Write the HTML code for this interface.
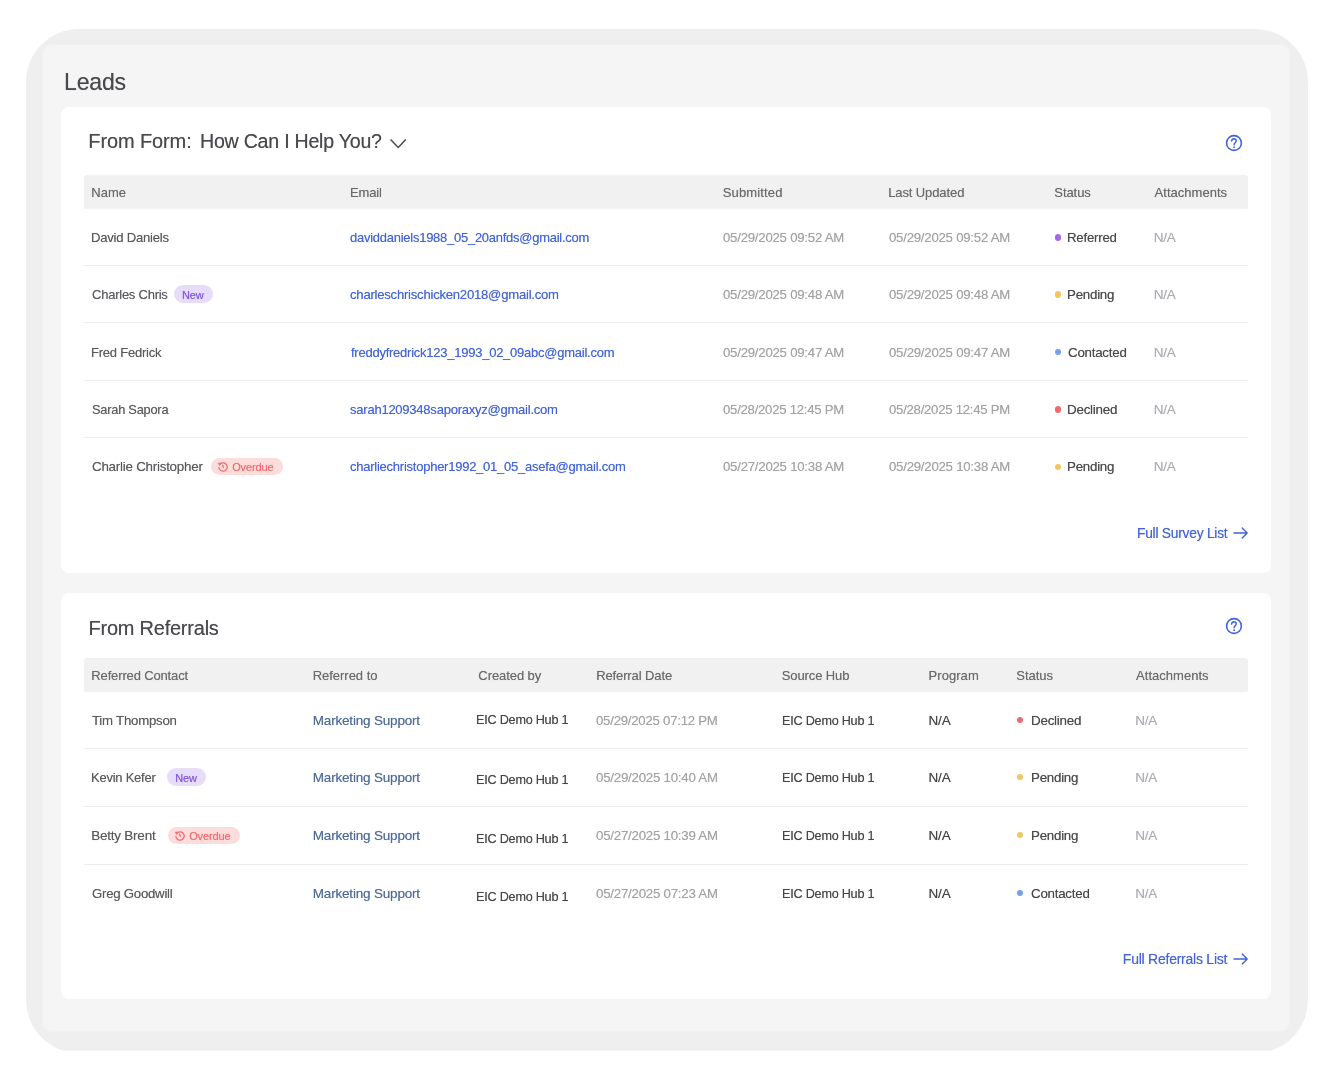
<!DOCTYPE html>
<html><head><meta charset="utf-8"><title>Leads</title>
<style>
html,body{margin:0;padding:0;}
body{width:1340px;height:1078px;position:relative;overflow:hidden;background:#ffffff;font-family:"Liberation Sans",sans-serif;}
#w{position:absolute;left:0;top:0;width:1340px;height:1078px;will-change:transform;}
.t{position:absolute;white-space:nowrap;}
.b{position:absolute;}
</style></head><body><div id="w">
<div class="b" style="left:26px;top:29px;width:1282.00px;height:1024.00px;background:#efefef;border-radius:53px;clip-path:inset(0 0 2.3px 0);"></div>
<div class="b" style="left:42px;top:44px;width:1248.00px;height:988.00px;background:#f5f5f5;border-radius:10px;box-shadow:inset 0 0 0 1px #f1f1f1;"></div>
<div class="b" style="left:60.5px;top:107px;width:1210.50px;height:466.00px;background:#ffffff;border-radius:8px;"></div>
<div class="b" style="left:60.5px;top:592.5px;width:1210.50px;height:406.50px;background:#ffffff;border-radius:8px;"></div>
<svg class="b" style="left:388px;top:136px" width="20" height="14" viewBox="0 0 20 14"><path d="M2.6 3.6 L10.2 11.4 L17.8 3.6" fill="none" stroke="#4a4a4d" stroke-width="1.5"/></svg>
<svg class="b" style="left:1223.9px;top:133px" width="20" height="20" viewBox="0 0 20 20"><circle cx="10" cy="10" r="7.4" fill="none" stroke="#4263d8" stroke-width="1.6"/><path d="M7.6 8.1 Q7.9 5.8 10 5.8 Q12.2 5.9 12.2 7.8 Q12.1 9.0 11 10 Q10.1 10.8 10.1 11.7" fill="none" stroke="#4263d8" stroke-width="1.5" stroke-linecap="round"/><circle cx="10.1" cy="14.2" r="0.9" fill="#4263d8"/></svg>
<svg class="b" style="left:1223.9px;top:616px" width="20" height="20" viewBox="0 0 20 20"><circle cx="10" cy="10" r="7.4" fill="none" stroke="#4263d8" stroke-width="1.6"/><path d="M7.6 8.1 Q7.9 5.8 10 5.8 Q12.2 5.9 12.2 7.8 Q12.1 9.0 11 10 Q10.1 10.8 10.1 11.7" fill="none" stroke="#4263d8" stroke-width="1.5" stroke-linecap="round"/><circle cx="10.1" cy="14.2" r="0.9" fill="#4263d8"/></svg>
<div class="b" style="left:84px;top:175px;width:1164.00px;height:34.00px;background:#f1f1f1;border-radius:3px 3px 2px 2px;"></div>
<div class="b" style="left:84px;top:265px;width:1164.00px;height:1.00px;background:#ededed;"></div>
<div class="b" style="left:84px;top:322px;width:1164.00px;height:1.00px;background:#ededed;"></div>
<div class="b" style="left:84px;top:380px;width:1164.00px;height:1.00px;background:#ededed;"></div>
<div class="b" style="left:84px;top:437px;width:1164.00px;height:1.00px;background:#ededed;"></div>
<div class="b" style="left:1054.90px;top:234.45px;width:6.2px;height:6.2px;border-radius:50%;background:#a06ae6"></div>
<div class="b" style="left:174px;top:285.05px;width:39px;height:17.8px;background:#e7ddf9;border-radius:9px;"></div>
<div class="b" style="left:1054.90px;top:291.45px;width:6.2px;height:6.2px;border-radius:50%;background:#f2c662"></div>
<div class="b" style="left:1054.90px;top:349.05px;width:6.2px;height:6.2px;border-radius:50%;background:#77a0e8"></div>
<div class="b" style="left:1054.90px;top:406.35px;width:6.2px;height:6.2px;border-radius:50%;background:#f06a70"></div>
<div class="b" style="left:210.5px;top:457.70px;width:72.5px;height:16.9px;background:#fddcdc;border-radius:9px;"></div>
<svg class="b" style="left:217.40px;top:460.60px" width="12" height="12" viewBox="0 0 12 12"><path d="M1.85 6.5 A4.2 4.2 0 1 0 3.4 2.7" fill="none" stroke="#f26a6d" stroke-width="1.25" stroke-linecap="round"/><path d="M1.3 2.0 L4.2 2.2 L2.6 4.6 Z" fill="#f26a6d" stroke="#f26a6d" stroke-width="0.6" stroke-linejoin="round"/><path d="M6.3 6.3 L5.7 4.2" fill="none" stroke="#f26a6d" stroke-width="1.3" stroke-linecap="round"/></svg>
<div class="b" style="left:1054.90px;top:463.50px;width:6.2px;height:6.2px;border-radius:50%;background:#f2c662"></div>
<svg class="b" style="left:1232px;top:524.9px" width="17" height="16" viewBox="0 0 17 16"><path d="M2 8 L15.2 8 M10.2 2.9 L15.2 8 L10.2 13.1" fill="none" stroke="#4264d6" stroke-width="1.4" stroke-linejoin="round" stroke-linecap="round"/></svg>
<div class="b" style="left:84px;top:658px;width:1164.00px;height:34.00px;background:#f1f1f1;border-radius:3px 3px 2px 2px;"></div>
<div class="b" style="left:84px;top:748px;width:1164.00px;height:1.00px;background:#ededed;"></div>
<div class="b" style="left:84px;top:806px;width:1164.00px;height:1.00px;background:#ededed;"></div>
<div class="b" style="left:84px;top:864px;width:1164.00px;height:1.00px;background:#ededed;"></div>
<div class="b" style="left:1017.20px;top:716.95px;width:6.2px;height:6.2px;border-radius:50%;background:#f06a70"></div>
<div class="b" style="left:167.2px;top:768.10px;width:39px;height:17.8px;background:#e7ddf9;border-radius:9px;"></div>
<div class="b" style="left:1017.20px;top:774.20px;width:6.2px;height:6.2px;border-radius:50%;background:#f2c662"></div>
<div class="b" style="left:167.5px;top:826.70px;width:72.5px;height:16.9px;background:#fddcdc;border-radius:9px;"></div>
<svg class="b" style="left:174.40px;top:829.60px" width="12" height="12" viewBox="0 0 12 12"><path d="M1.85 6.5 A4.2 4.2 0 1 0 3.4 2.7" fill="none" stroke="#f26a6d" stroke-width="1.25" stroke-linecap="round"/><path d="M1.3 2.0 L4.2 2.2 L2.6 4.6 Z" fill="#f26a6d" stroke="#f26a6d" stroke-width="0.6" stroke-linejoin="round"/><path d="M6.3 6.3 L5.7 4.2" fill="none" stroke="#f26a6d" stroke-width="1.3" stroke-linecap="round"/></svg>
<div class="b" style="left:1017.20px;top:832.20px;width:6.2px;height:6.2px;border-radius:50%;background:#f2c662"></div>
<div class="b" style="left:1017.20px;top:890.20px;width:6.2px;height:6.2px;border-radius:50%;background:#77a0e8"></div>
<svg class="b" style="left:1232px;top:950.7px" width="17" height="16" viewBox="0 0 17 16"><path d="M2 8 L15.2 8 M10.2 2.9 L15.2 8 L10.2 13.1" fill="none" stroke="#4264d6" stroke-width="1.4" stroke-linejoin="round" stroke-linecap="round"/></svg>
<div class="t" style="left:64.13px;top:67.00px;font-size:24px;line-height:30.0px;color:#48484d;letter-spacing:-0.250px;text-shadow:0 0 0.7px rgba(72,72,77,0.6);transform:scaleX(0.9623);transform-origin:1.97px 0;">Leads</div>
<div class="t" style="left:88.36px;top:129.00px;font-size:20px;line-height:25.0px;color:#48484d;letter-spacing:-0.123px;text-shadow:0 0 0.7px rgba(72,72,77,0.6);">From Form:</div>
<div class="t" style="left:200.16px;top:129.00px;font-size:20px;line-height:25.0px;color:#48484d;letter-spacing:-0.250px;text-shadow:0 0 0.7px rgba(72,72,77,0.6);transform:scaleX(0.9800);transform-origin:1.64px 0;">How Can I Help You?</div>
<div class="t" style="left:91.33px;top:185.00px;font-size:13px;line-height:16.25px;color:#6a6a6a;letter-spacing:-0.014px;text-shadow:0 0 0.7px rgba(106,106,106,0.6);">Name</div>
<div class="t" style="left:349.93px;top:185.00px;font-size:13px;line-height:16.25px;color:#6a6a6a;letter-spacing:-0.124px;text-shadow:0 0 0.7px rgba(106,106,106,0.6);">Email</div>
<div class="t" style="left:722.71px;top:185.00px;font-size:13px;line-height:16.25px;color:#6a6a6a;letter-spacing:0.153px;text-shadow:0 0 0.7px rgba(106,106,106,0.6);">Submitted</div>
<div class="t" style="left:888.13px;top:185.00px;font-size:13px;line-height:16.25px;color:#6a6a6a;letter-spacing:-0.099px;text-shadow:0 0 0.7px rgba(106,106,106,0.6);">Last Updated</div>
<div class="t" style="left:1054.31px;top:185.00px;font-size:13px;line-height:16.25px;color:#6a6a6a;letter-spacing:-0.074px;text-shadow:0 0 0.7px rgba(106,106,106,0.6);">Status</div>
<div class="t" style="left:1154.57px;top:185.00px;font-size:13px;line-height:16.25px;color:#6a6a6a;letter-spacing:0.021px;text-shadow:0 0 0.7px rgba(106,106,106,0.6);">Attachments</div>
<div class="t" style="left:91.29px;top:230.00px;font-size:13.5px;line-height:16.88px;color:#5a5a5e;letter-spacing:-0.250px;text-shadow:0 0 0.7px rgba(90,90,94,0.6);transform:scaleX(0.9709);transform-origin:1.11px 0;">David Daniels</div>
<div class="t" style="left:350.13px;top:230.00px;font-size:13.5px;line-height:16.88px;color:#4264d6;letter-spacing:-0.250px;text-shadow:0 0 0.7px rgba(66,100,214,0.6);transform:scaleX(0.9597);transform-origin:0.57px 0;">daviddaniels1988_05_20anfds@gmail.com</div>
<div class="t" style="left:722.97px;top:230.00px;font-size:13.5px;line-height:16.88px;color:#a3a3a6;letter-spacing:-0.250px;text-shadow:0 0 0.7px rgba(163,163,166,0.6);transform:scaleX(0.9790);transform-origin:0.53px 0;">05/29/2025 09:52 AM</div>
<div class="t" style="left:888.67px;top:230.00px;font-size:13.5px;line-height:16.88px;color:#a3a3a6;letter-spacing:-0.250px;text-shadow:0 0 0.7px rgba(163,163,166,0.6);transform:scaleX(0.9790);transform-origin:0.53px 0;">05/29/2025 09:52 AM</div>
<div class="t" style="left:1067.19px;top:230.00px;font-size:13.5px;line-height:16.88px;color:#48484b;letter-spacing:-0.250px;text-shadow:0 0 0.7px rgba(72,72,75,0.6);transform:scaleX(0.9829);transform-origin:1.11px 0;">Referred</div>
<div class="t" style="left:1153.69px;top:230.00px;font-size:13.5px;line-height:16.88px;color:#adadb5;letter-spacing:-0.175px;text-shadow:0 0 0.7px rgba(173,173,181,0.6);">N/A</div>
<div class="t" style="left:91.71px;top:287.00px;font-size:13.5px;line-height:16.88px;color:#5a5a5e;letter-spacing:-0.250px;text-shadow:0 0 0.7px rgba(90,90,94,0.6);transform:scaleX(0.9629);transform-origin:0.69px 0;">Charles Chris</div>
<div class="t" style="left:182.10px;top:289.00px;font-size:11px;line-height:13.75px;color:#8156de;letter-spacing:-0.185px;text-shadow:0 0 0.7px rgba(129,86,222,0.6);">New</div>
<div class="t" style="left:350.13px;top:287.00px;font-size:13.5px;line-height:16.88px;color:#4264d6;letter-spacing:-0.250px;text-shadow:0 0 0.7px rgba(66,100,214,0.6);transform:scaleX(0.9718);transform-origin:0.57px 0;">charleschrischicken2018@gmail.com</div>
<div class="t" style="left:722.97px;top:287.00px;font-size:13.5px;line-height:16.88px;color:#a3a3a6;letter-spacing:-0.250px;text-shadow:0 0 0.7px rgba(163,163,166,0.6);transform:scaleX(0.9790);transform-origin:0.53px 0;">05/29/2025 09:48 AM</div>
<div class="t" style="left:888.67px;top:287.00px;font-size:13.5px;line-height:16.88px;color:#a3a3a6;letter-spacing:-0.250px;text-shadow:0 0 0.7px rgba(163,163,166,0.6);transform:scaleX(0.9790);transform-origin:0.53px 0;">05/29/2025 09:48 AM</div>
<div class="t" style="left:1067.19px;top:287.00px;font-size:13.5px;line-height:16.88px;color:#48484b;letter-spacing:-0.250px;text-shadow:0 0 0.7px rgba(72,72,75,0.6);transform:scaleX(0.9872);transform-origin:1.11px 0;">Pending</div>
<div class="t" style="left:1153.69px;top:287.00px;font-size:13.5px;line-height:16.88px;color:#adadb5;letter-spacing:-0.175px;text-shadow:0 0 0.7px rgba(173,173,181,0.6);">N/A</div>
<div class="t" style="left:91.29px;top:345.00px;font-size:13.5px;line-height:16.88px;color:#5a5a5e;letter-spacing:-0.250px;text-shadow:0 0 0.7px rgba(90,90,94,0.6);transform:scaleX(0.9637);transform-origin:1.11px 0;">Fred Fedrick</div>
<div class="t" style="left:350.51px;top:345.00px;font-size:13.5px;line-height:16.88px;color:#4264d6;letter-spacing:-0.250px;text-shadow:0 0 0.7px rgba(66,100,214,0.6);transform:scaleX(0.9620);transform-origin:0.19px 0;">freddyfredrick123_1993_02_09abc@gmail.com</div>
<div class="t" style="left:722.97px;top:345.00px;font-size:13.5px;line-height:16.88px;color:#a3a3a6;letter-spacing:-0.250px;text-shadow:0 0 0.7px rgba(163,163,166,0.6);transform:scaleX(0.9790);transform-origin:0.53px 0;">05/29/2025 09:47 AM</div>
<div class="t" style="left:888.67px;top:345.00px;font-size:13.5px;line-height:16.88px;color:#a3a3a6;letter-spacing:-0.250px;text-shadow:0 0 0.7px rgba(163,163,166,0.6);transform:scaleX(0.9790);transform-origin:0.53px 0;">05/29/2025 09:47 AM</div>
<div class="t" style="left:1067.61px;top:345.00px;font-size:13.5px;line-height:16.88px;color:#48484b;letter-spacing:-0.250px;text-shadow:0 0 0.7px rgba(72,72,75,0.6);transform:scaleX(0.9878);transform-origin:0.69px 0;">Contacted</div>
<div class="t" style="left:1153.69px;top:345.00px;font-size:13.5px;line-height:16.88px;color:#adadb5;letter-spacing:-0.175px;text-shadow:0 0 0.7px rgba(173,173,181,0.6);">N/A</div>
<div class="t" style="left:91.79px;top:402.00px;font-size:13.5px;line-height:16.88px;color:#5a5a5e;letter-spacing:-0.250px;text-shadow:0 0 0.7px rgba(90,90,94,0.6);transform:scaleX(0.9494);transform-origin:0.61px 0;">Sarah Sapora</div>
<div class="t" style="left:350.32px;top:402.00px;font-size:13.5px;line-height:16.88px;color:#4264d6;letter-spacing:-0.250px;text-shadow:0 0 0.7px rgba(66,100,214,0.6);transform:scaleX(0.9644);transform-origin:0.38px 0;">sarah1209348saporaxyz@gmail.com</div>
<div class="t" style="left:722.97px;top:402.00px;font-size:13.5px;line-height:16.88px;color:#a3a3a6;letter-spacing:-0.250px;text-shadow:0 0 0.7px rgba(163,163,166,0.6);transform:scaleX(0.9724);transform-origin:0.53px 0;">05/28/2025 12:45 PM</div>
<div class="t" style="left:888.67px;top:402.00px;font-size:13.5px;line-height:16.88px;color:#a3a3a6;letter-spacing:-0.250px;text-shadow:0 0 0.7px rgba(163,163,166,0.6);transform:scaleX(0.9724);transform-origin:0.53px 0;">05/28/2025 12:45 PM</div>
<div class="t" style="left:1067.19px;top:402.00px;font-size:13.5px;line-height:16.88px;color:#48484b;letter-spacing:-0.250px;text-shadow:0 0 0.7px rgba(72,72,75,0.6);transform:scaleX(0.9930);transform-origin:1.11px 0;">Declined</div>
<div class="t" style="left:1153.69px;top:402.00px;font-size:13.5px;line-height:16.88px;color:#adadb5;letter-spacing:-0.175px;text-shadow:0 0 0.7px rgba(173,173,181,0.6);">N/A</div>
<div class="t" style="left:91.71px;top:459.00px;font-size:13.5px;line-height:16.88px;color:#5a5a5e;letter-spacing:-0.250px;text-shadow:0 0 0.7px rgba(90,90,94,0.6);transform:scaleX(0.9913);transform-origin:0.69px 0;">Charlie Christopher</div>
<div class="t" style="left:232.18px;top:461.00px;font-size:11px;line-height:13.75px;color:#f26a6d;letter-spacing:-0.121px;text-shadow:0 0 0.7px rgba(242,106,109,0.6);">Overdue</div>
<div class="t" style="left:350.13px;top:459.00px;font-size:13.5px;line-height:16.88px;color:#4264d6;letter-spacing:-0.250px;text-shadow:0 0 0.7px rgba(66,100,214,0.6);transform:scaleX(0.9620);transform-origin:0.57px 0;">charliechristopher1992_01_05_asefa@gmail.com</div>
<div class="t" style="left:722.97px;top:459.00px;font-size:13.5px;line-height:16.88px;color:#a3a3a6;letter-spacing:-0.250px;text-shadow:0 0 0.7px rgba(163,163,166,0.6);transform:scaleX(0.9790);transform-origin:0.53px 0;">05/27/2025 10:38 AM</div>
<div class="t" style="left:888.67px;top:459.00px;font-size:13.5px;line-height:16.88px;color:#a3a3a6;letter-spacing:-0.250px;text-shadow:0 0 0.7px rgba(163,163,166,0.6);transform:scaleX(0.9790);transform-origin:0.53px 0;">05/29/2025 10:38 AM</div>
<div class="t" style="left:1067.19px;top:459.00px;font-size:13.5px;line-height:16.88px;color:#48484b;letter-spacing:-0.250px;text-shadow:0 0 0.7px rgba(72,72,75,0.6);transform:scaleX(0.9872);transform-origin:1.11px 0;">Pending</div>
<div class="t" style="left:1153.69px;top:459.00px;font-size:13.5px;line-height:16.88px;color:#adadb5;letter-spacing:-0.175px;text-shadow:0 0 0.7px rgba(173,173,181,0.6);">N/A</div>
<div class="t" style="left:1136.65px;top:525.00px;font-size:14px;line-height:17.5px;color:#4264d6;letter-spacing:-0.250px;text-shadow:0 0 0.7px rgba(66,100,214,0.6);transform:scaleX(0.9855);transform-origin:1.15px 0;">Full Survey List</div>
<div class="t" style="left:88.46px;top:616.00px;font-size:20px;line-height:25.0px;color:#48484d;letter-spacing:-0.227px;text-shadow:0 0 0.7px rgba(72,72,77,0.6);">From Referrals</div>
<div class="t" style="left:91.33px;top:668.00px;font-size:13px;line-height:16.25px;color:#6a6a6a;letter-spacing:-0.148px;text-shadow:0 0 0.7px rgba(106,106,106,0.6);">Referred Contact</div>
<div class="t" style="left:312.73px;top:668.00px;font-size:13px;line-height:16.25px;color:#6a6a6a;letter-spacing:-0.029px;text-shadow:0 0 0.7px rgba(106,106,106,0.6);">Referred to</div>
<div class="t" style="left:478.34px;top:668.00px;font-size:13px;line-height:16.25px;color:#6a6a6a;letter-spacing:-0.078px;text-shadow:0 0 0.7px rgba(106,106,106,0.6);">Created by</div>
<div class="t" style="left:596.13px;top:668.00px;font-size:13px;line-height:16.25px;color:#6a6a6a;letter-spacing:-0.109px;text-shadow:0 0 0.7px rgba(106,106,106,0.6);">Referral Date</div>
<div class="t" style="left:781.71px;top:668.00px;font-size:13px;line-height:16.25px;color:#6a6a6a;letter-spacing:-0.105px;text-shadow:0 0 0.7px rgba(106,106,106,0.6);">Source Hub</div>
<div class="t" style="left:928.53px;top:668.00px;font-size:13px;line-height:16.25px;color:#6a6a6a;letter-spacing:0.061px;text-shadow:0 0 0.7px rgba(106,106,106,0.6);">Program</div>
<div class="t" style="left:1016.31px;top:668.00px;font-size:13px;line-height:16.25px;color:#6a6a6a;letter-spacing:-0.054px;text-shadow:0 0 0.7px rgba(106,106,106,0.6);">Status</div>
<div class="t" style="left:1136.07px;top:668.00px;font-size:13px;line-height:16.25px;color:#6a6a6a;letter-spacing:0.021px;text-shadow:0 0 0.7px rgba(106,106,106,0.6);">Attachments</div>
<div class="t" style="left:92.00px;top:713.00px;font-size:13.5px;line-height:16.88px;color:#5a5a5e;letter-spacing:-0.250px;text-shadow:0 0 0.7px rgba(90,90,94,0.6);transform:scaleX(0.9816);transform-origin:0.30px 0;">Tim Thompson</div>
<div class="t" style="left:312.79px;top:713.00px;font-size:13.5px;line-height:16.88px;color:#4f6a97;letter-spacing:-0.186px;text-shadow:0 0 0.7px rgba(79,106,151,0.6);">Marketing Support</div>
<div class="t" style="left:476.39px;top:712.00px;font-size:13.5px;line-height:16.88px;color:#464649;letter-spacing:-0.250px;text-shadow:0 0 0.7px rgba(70,70,73,0.6);transform:scaleX(0.9356);transform-origin:1.11px 0;">EIC Demo Hub 1</div>
<div class="t" style="left:596.47px;top:713.00px;font-size:13.5px;line-height:16.88px;color:#a3a3a6;letter-spacing:-0.250px;text-shadow:0 0 0.7px rgba(163,163,166,0.6);transform:scaleX(0.9780);transform-origin:0.53px 0;">05/29/2025 07:12 PM</div>
<div class="t" style="left:781.59px;top:713.00px;font-size:13.5px;line-height:16.88px;color:#464649;letter-spacing:-0.250px;text-shadow:0 0 0.7px rgba(70,70,73,0.6);transform:scaleX(0.9356);transform-origin:1.11px 0;">EIC Demo Hub 1</div>
<div class="t" style="left:928.59px;top:713.00px;font-size:13.5px;line-height:16.88px;color:#464649;letter-spacing:-0.225px;text-shadow:0 0 0.7px rgba(70,70,73,0.6);">N/A</div>
<div class="t" style="left:1030.59px;top:713.00px;font-size:13.5px;line-height:16.88px;color:#48484b;letter-spacing:-0.250px;text-shadow:0 0 0.7px rgba(72,72,75,0.6);transform:scaleX(0.9930);transform-origin:1.11px 0;">Declined</div>
<div class="t" style="left:1135.29px;top:713.00px;font-size:13.5px;line-height:16.88px;color:#adadb5;letter-spacing:-0.225px;text-shadow:0 0 0.7px rgba(173,173,181,0.6);">N/A</div>
<div class="t" style="left:91.19px;top:770.00px;font-size:13.5px;line-height:16.88px;color:#5a5a5e;letter-spacing:-0.250px;text-shadow:0 0 0.7px rgba(90,90,94,0.6);transform:scaleX(0.9613);transform-origin:1.11px 0;">Kevin Kefer</div>
<div class="t" style="left:175.30px;top:772.00px;font-size:11px;line-height:13.75px;color:#8156de;letter-spacing:-0.185px;text-shadow:0 0 0.7px rgba(129,86,222,0.6);">New</div>
<div class="t" style="left:312.79px;top:770.00px;font-size:13.5px;line-height:16.88px;color:#4f6a97;letter-spacing:-0.186px;text-shadow:0 0 0.7px rgba(79,106,151,0.6);">Marketing Support</div>
<div class="t" style="left:476.39px;top:772.00px;font-size:13.5px;line-height:16.88px;color:#464649;letter-spacing:-0.250px;text-shadow:0 0 0.7px rgba(70,70,73,0.6);transform:scaleX(0.9356);transform-origin:1.11px 0;">EIC Demo Hub 1</div>
<div class="t" style="left:596.47px;top:770.00px;font-size:13.5px;line-height:16.88px;color:#a3a3a6;letter-spacing:-0.250px;text-shadow:0 0 0.7px rgba(163,163,166,0.6);transform:scaleX(0.9847);transform-origin:0.53px 0;">05/29/2025 10:40 AM</div>
<div class="t" style="left:781.59px;top:770.00px;font-size:13.5px;line-height:16.88px;color:#464649;letter-spacing:-0.250px;text-shadow:0 0 0.7px rgba(70,70,73,0.6);transform:scaleX(0.9356);transform-origin:1.11px 0;">EIC Demo Hub 1</div>
<div class="t" style="left:928.59px;top:770.00px;font-size:13.5px;line-height:16.88px;color:#464649;letter-spacing:-0.225px;text-shadow:0 0 0.7px rgba(70,70,73,0.6);">N/A</div>
<div class="t" style="left:1030.59px;top:770.00px;font-size:13.5px;line-height:16.88px;color:#48484b;letter-spacing:-0.250px;text-shadow:0 0 0.7px rgba(72,72,75,0.6);transform:scaleX(0.9872);transform-origin:1.11px 0;">Pending</div>
<div class="t" style="left:1135.29px;top:770.00px;font-size:13.5px;line-height:16.88px;color:#adadb5;letter-spacing:-0.225px;text-shadow:0 0 0.7px rgba(173,173,181,0.6);">N/A</div>
<div class="t" style="left:91.19px;top:828.00px;font-size:13.5px;line-height:16.88px;color:#5a5a5e;letter-spacing:-0.229px;text-shadow:0 0 0.7px rgba(90,90,94,0.6);">Betty Brent</div>
<div class="t" style="left:189.18px;top:830.00px;font-size:11px;line-height:13.75px;color:#f26a6d;letter-spacing:-0.121px;text-shadow:0 0 0.7px rgba(242,106,109,0.6);">Overdue</div>
<div class="t" style="left:312.79px;top:828.00px;font-size:13.5px;line-height:16.88px;color:#4f6a97;letter-spacing:-0.186px;text-shadow:0 0 0.7px rgba(79,106,151,0.6);">Marketing Support</div>
<div class="t" style="left:476.39px;top:831.00px;font-size:13.5px;line-height:16.88px;color:#464649;letter-spacing:-0.250px;text-shadow:0 0 0.7px rgba(70,70,73,0.6);transform:scaleX(0.9356);transform-origin:1.11px 0;">EIC Demo Hub 1</div>
<div class="t" style="left:596.47px;top:828.00px;font-size:13.5px;line-height:16.88px;color:#a3a3a6;letter-spacing:-0.250px;text-shadow:0 0 0.7px rgba(163,163,166,0.6);transform:scaleX(0.9847);transform-origin:0.53px 0;">05/27/2025 10:39 AM</div>
<div class="t" style="left:781.59px;top:828.00px;font-size:13.5px;line-height:16.88px;color:#464649;letter-spacing:-0.250px;text-shadow:0 0 0.7px rgba(70,70,73,0.6);transform:scaleX(0.9356);transform-origin:1.11px 0;">EIC Demo Hub 1</div>
<div class="t" style="left:928.59px;top:828.00px;font-size:13.5px;line-height:16.88px;color:#464649;letter-spacing:-0.225px;text-shadow:0 0 0.7px rgba(70,70,73,0.6);">N/A</div>
<div class="t" style="left:1030.59px;top:828.00px;font-size:13.5px;line-height:16.88px;color:#48484b;letter-spacing:-0.250px;text-shadow:0 0 0.7px rgba(72,72,75,0.6);transform:scaleX(0.9872);transform-origin:1.11px 0;">Pending</div>
<div class="t" style="left:1135.29px;top:828.00px;font-size:13.5px;line-height:16.88px;color:#adadb5;letter-spacing:-0.225px;text-shadow:0 0 0.7px rgba(173,173,181,0.6);">N/A</div>
<div class="t" style="left:91.62px;top:886.00px;font-size:13.5px;line-height:16.88px;color:#5a5a5e;letter-spacing:-0.250px;text-shadow:0 0 0.7px rgba(90,90,94,0.6);transform:scaleX(0.9777);transform-origin:0.68px 0;">Greg Goodwill</div>
<div class="t" style="left:312.79px;top:886.00px;font-size:13.5px;line-height:16.88px;color:#4f6a97;letter-spacing:-0.186px;text-shadow:0 0 0.7px rgba(79,106,151,0.6);">Marketing Support</div>
<div class="t" style="left:476.39px;top:889.00px;font-size:13.5px;line-height:16.88px;color:#464649;letter-spacing:-0.250px;text-shadow:0 0 0.7px rgba(70,70,73,0.6);transform:scaleX(0.9356);transform-origin:1.11px 0;">EIC Demo Hub 1</div>
<div class="t" style="left:596.47px;top:886.00px;font-size:13.5px;line-height:16.88px;color:#a3a3a6;letter-spacing:-0.250px;text-shadow:0 0 0.7px rgba(163,163,166,0.6);transform:scaleX(0.9847);transform-origin:0.53px 0;">05/27/2025 07:23 AM</div>
<div class="t" style="left:781.59px;top:886.00px;font-size:13.5px;line-height:16.88px;color:#464649;letter-spacing:-0.250px;text-shadow:0 0 0.7px rgba(70,70,73,0.6);transform:scaleX(0.9356);transform-origin:1.11px 0;">EIC Demo Hub 1</div>
<div class="t" style="left:928.59px;top:886.00px;font-size:13.5px;line-height:16.88px;color:#464649;letter-spacing:-0.225px;text-shadow:0 0 0.7px rgba(70,70,73,0.6);">N/A</div>
<div class="t" style="left:1031.01px;top:886.00px;font-size:13.5px;line-height:16.88px;color:#48484b;letter-spacing:-0.250px;text-shadow:0 0 0.7px rgba(72,72,75,0.6);transform:scaleX(0.9878);transform-origin:0.69px 0;">Contacted</div>
<div class="t" style="left:1135.29px;top:886.00px;font-size:13.5px;line-height:16.88px;color:#adadb5;letter-spacing:-0.225px;text-shadow:0 0 0.7px rgba(173,173,181,0.6);">N/A</div>
<div class="t" style="left:1122.85px;top:951.00px;font-size:14px;line-height:17.5px;color:#4264d6;letter-spacing:-0.241px;text-shadow:0 0 0.7px rgba(66,100,214,0.6);">Full Referrals List</div>
</div></body></html>
